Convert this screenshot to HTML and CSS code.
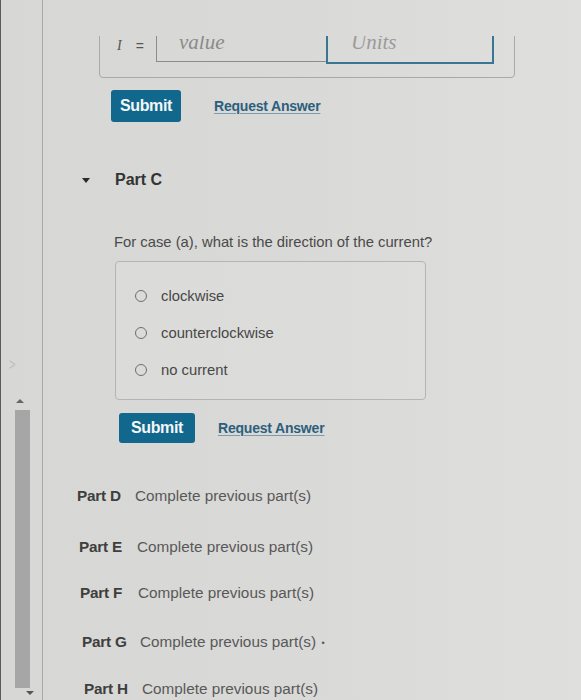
FILE: index.html
```html
<!DOCTYPE html>
<html>
<head>
<meta charset="utf-8">
<link rel="stylesheet" href="styles.css">
</head>
<body>
<div class="screen">
  <div class="gutter">
    <div class="chevron">&gt;</div>
    <div class="scrollbar">
      <div class="arrow-up"></div>
      <div class="thumb"></div>
      <div class="arrow-down"></div>
    </div>
  </div>
  <div class="main">
    <div class="clip">
      <div class="answer-box">
        <div class="var-label"><span class="var-i">I</span><span class="eq">=</span></div>
        <div class="field value-field">value</div>
        <div class="field units-field">Units</div>
      </div>
    </div>
    <div class="actions actions-b">
      <button class="submit">Submit</button>
      <a class="request">Request Answer</a>
    </div>

    <div class="part-head">
      <span class="caret"></span>
      <span class="part-title">Part C</span>
    </div>
    <p class="question">For case (a), what is the direction of the current?</p>
    <div class="options">
      <label class="option"><span class="radio"></span><span>clockwise</span></label>
      <label class="option"><span class="radio"></span><span>counterclockwise</span></label>
      <label class="option"><span class="radio"></span><span>no current</span></label>
    </div>
    <div class="actions actions-c">
      <button class="submit">Submit</button>
      <a class="request">Request Answer</a>
    </div>

    <div class="locked-list">
      <div class="locked l-d"><b>Part D</b><span>Complete previous part(s)</span></div>
      <div class="locked l-e"><b>Part E</b><span>Complete previous part(s)</span></div>
      <div class="locked l-f"><b>Part F</b><span>Complete previous part(s)</span></div>
      <div class="locked l-g"><b>Part G</b><span>Complete previous part(s)</span></div>
      <div class="locked l-h"><b>Part H</b><span>Complete previous part(s)</span></div>
    </div>
  </div>
</div>
</body>
</html>
```
FILE: styles.css
```css
html, body {
  margin: 0;
  padding: 0;
}
body {
  width: 581px;
  height: 700px;
  overflow: hidden;
  background: linear-gradient(90deg, #d7d7d5 0%, #d9d9d7 50%, #dfdfdd 100%);
  font-family: "Liberation Sans", Arial, sans-serif;
  color: #444;
}
.screen {
  display: flex;
  height: 700px;
  border-left: 1px solid #5a5a5a;
}
.gutter {
  width: 42px;
  border-right: 1px solid #a9a9a7;
  display: flex;
  flex-direction: column;
  padding-top: 355px;
  box-sizing: border-box;
}
.chevron {
  margin-left: 8px;
  color: #bdbdbd;
  font-size: 16px;
  line-height: 20px;
  transform: scaleX(0.7);
  transform-origin: left;
}
.scrollbar {
  margin-top: 24px;
  display: flex;
  flex-direction: column;
  align-items: flex-start;
}
.arrow-up {
  margin-left: 15px;
  width: 0;
  height: 0;
  border-left: 4px solid transparent;
  border-right: 4px solid transparent;
  border-bottom: 4px solid #666;
}
.thumb {
  margin-top: 7px;
  margin-left: 14px;
  width: 15px;
  height: 278px;
  background: #a6a6a6;
}
.arrow-down {
  margin-top: 3px;
  margin-left: 25px;
  width: 0;
  height: 0;
  border-left: 4px solid transparent;
  border-right: 4px solid transparent;
  border-top: 4px solid #555;
}
.main {
  flex: 1;
  padding-top: 36px;
}
.clip {
  height: 44px;
  overflow: hidden;
}
.answer-box {
  margin-top: -10px;
  margin-left: 56px;
  width: 416px;
  box-sizing: border-box;
  border: 1px solid #a9a9a9;
  border-radius: 4px;
  padding: 5px 0 13px 17px;
  display: flex;
  align-items: flex-start;
}
.var-label {
  width: 39px;
  padding-top: 5px;
  font-size: 14px;
  color: #555;
  line-height: 18px;
  display: flex;
}
.var-i {
  font-family: "Liberation Serif", serif;
  font-style: italic;
}
.eq {
  margin-left: 14px;
}
.field {
  box-sizing: border-box;
  font-family: "Liberation Serif", serif;
  font-style: italic;
  font-size: 21px;
  line-height: 20px;
  color: #8a8a8a;
}
.value-field {
  width: 170px;
  height: 30px;
  border-left: 1px solid #8c8c8c;
  border-bottom: 1px solid #8c8c8c;
  padding-left: 22px;
}
.units-field {
  width: 168px;
  height: 32px;
  border: 2px solid #3a7593;
  border-top: none;
  padding-left: 23px;
  color: #9a9a9a;
}
.actions {
  display: flex;
  align-items: center;
}
.actions-b {
  margin-top: 10px;
  margin-left: 68px;
  gap: 33px;
}
.actions-c {
  margin-top: 13px;
  margin-left: 76px;
  gap: 23px;
}
.submit {
  font-family: "Liberation Sans", Arial, sans-serif;
  font-weight: bold;
  font-size: 16px;
  letter-spacing: -0.4px;
  color: #f4f7f9;
  background: #12688c;
  border: none;
  border-radius: 3px;
  width: 70px;
  height: 32px;
  padding: 0;
}
.actions-c .submit {
  width: 76px;
  height: 30px;
}
.request {
  font-weight: bold;
  font-size: 14px;
  letter-spacing: -0.2px;
  color: #2c5f7e;
  text-decoration: underline;
  text-decoration-color: #7b9bb0;
  text-underline-offset: 2px;
}
.part-head {
  margin-top: 48px;
  margin-left: 39px;
  display: flex;
  align-items: center;
  height: 20px;
}
.caret {
  width: 0;
  height: 0;
  border-left: 4.5px solid transparent;
  border-right: 4.5px solid transparent;
  border-top: 5px solid #2a2a2a;
}
.part-title {
  margin-left: 25px;
  font-weight: bold;
  font-size: 16px;
  color: #333;
}
.question {
  margin: 42px 0 0 71px;
  font-size: 14.8px;
  line-height: 20px;
  color: #4a4a4a;
}
.options {
  margin-top: 9px;
  margin-left: 72px;
  width: 311px;
  height: 139px;
  box-sizing: border-box;
  border: 1px solid #b4b4b4;
  border-radius: 4px;
  background: rgba(255, 255, 255, 0.08);
  padding-top: 24px;
  padding-left: 19px;
  display: flex;
  flex-direction: column;
  gap: 17px;
}
.option {
  display: flex;
  align-items: center;
  height: 20px;
  font-size: 14.8px;
  color: #474747;
}
.radio {
  width: 10px;
  height: 10px;
  border: 1.6px solid #6e6e6e;
  border-radius: 50%;
  margin-right: 14px;
}
.locked-list {
  margin-top: 43px;
  display: flex;
  flex-direction: column;
  gap: 28px;
}
.locked {
  display: flex;
  align-items: center;
  height: 20px;
  font-size: 15.3px;
  color: #585858;
}
.locked b {
  color: #3e3e3e;
  width: 58px;
  letter-spacing: -0.2px;
}
.l-d { margin-left: 34px; }
.l-e { margin-left: 36px; margin-top: 3px; }
.l-f { margin-left: 37px; margin-top: -2px; }
.l-g { margin-left: 39px; margin-top: 1px; }
.l-h { margin-left: 41px; margin-top: -1px; }
.l-g span::after {
  content: " \2022";
  font-size: 9px;
  margin-left: 3px;
  vertical-align: middle;
}
```
